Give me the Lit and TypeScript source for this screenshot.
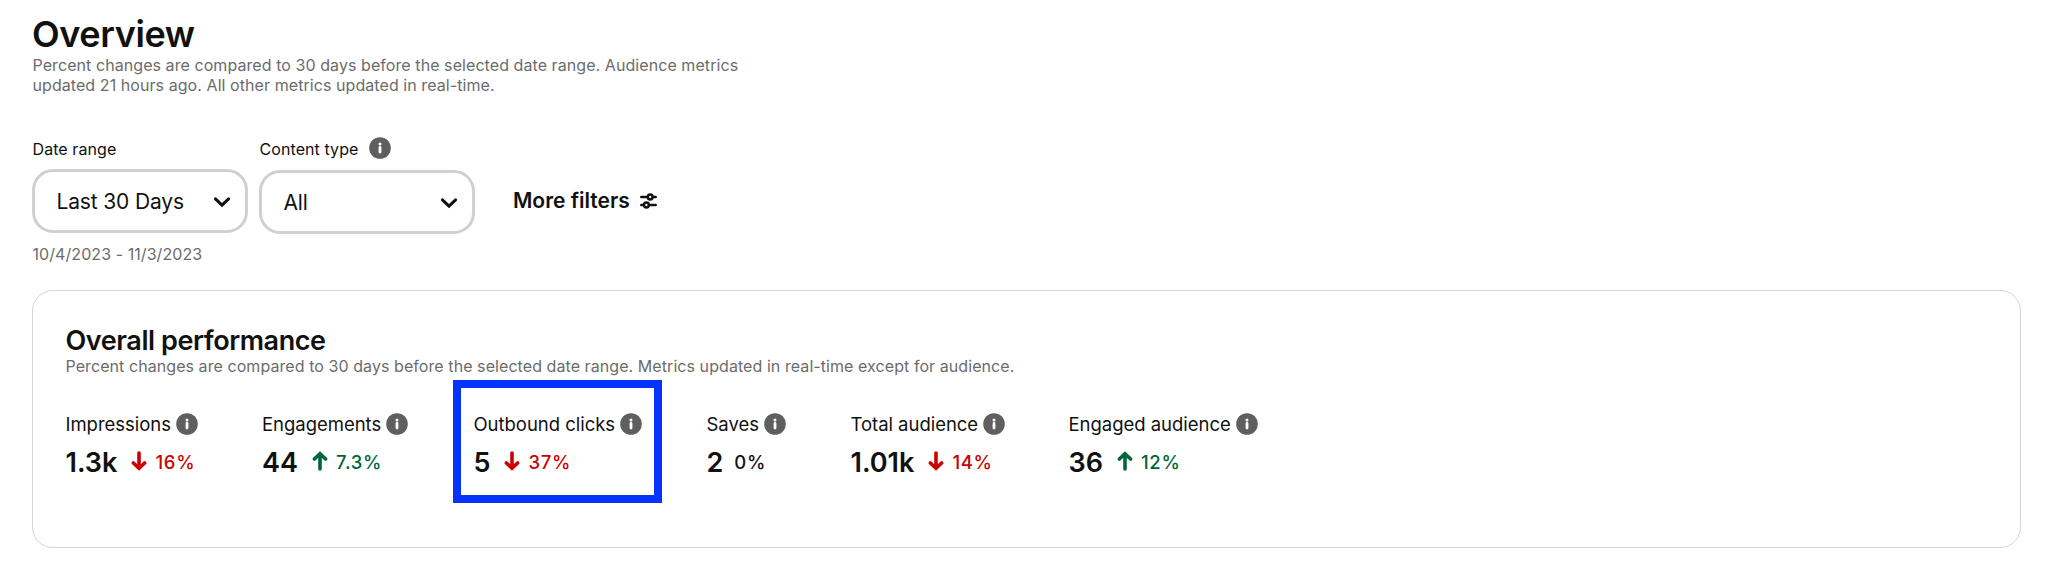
import { LitElement, html, css, svg } from "lit";
import { customElement, property } from "lit/decorators.js";

@customElement("info-icon")
class InfoIcon extends LitElement {
  static styles = css`
    :host { display: block; width: 22px; height: 22px; flex: none; }
    svg { display: block; width: 100%; height: 100%; }
  `;
  render() {
    return html`<svg viewBox="0 0 22 22">
      <circle cx="11" cy="11" r="10.8" fill="#5f5f5f"/>
      <circle cx="11" cy="6.9" r="1.5" fill="#fff"/>
      <path d="M11 10.4V15" stroke="#fff" stroke-width="2.8" stroke-linecap="round"/>
    </svg>`;
  }
}

@customElement("select-box")
class SelectBox extends LitElement {
  @property() value = "";
  static styles = css`
    :host {
      display: flex; align-items: center; justify-content: space-between;
      box-sizing: border-box; width: 216px; height: 64px;
      padding: 0 14px 0 21.5px; border: 3px solid #d0d0d0; border-radius: 21px;
      font-size: 21px; line-height: 26px; letter-spacing: -0.15px;
    }
    span { padding-top: 2px; }
    svg { display: block; width: 18px; height: 12px; margin-top: 1px; }
  `;
  render() {
    return html`<span>${this.value}</span>
      <svg viewBox="0 0 18 12"><path d="M2.4 2.8L9 9.2L15.6 2.8" fill="none" stroke="#111" stroke-width="3" stroke-linecap="round"/></svg>`;
  }
}

interface Metric { label: string; value: string; change: string; trend: "up" | "down" | "flat"; }

const METRICS: Metric[] = [
  { label: "Impressions", value: "1.3k", change: "16%", trend: "down" },
  { label: "Engagements", value: "44", change: "7.3%", trend: "up" },
  { label: "Outbound clicks", value: "5", change: "37%", trend: "down" },
  { label: "Saves", value: "2", change: "0%", trend: "flat" },
  { label: "Total audience", value: "1.01k", change: "14%", trend: "down" },
  { label: "Engaged audience", value: "36", change: "12%", trend: "up" },
];

@customElement("app-root")
class AppRoot extends LitElement {
  static styles = css`
    :host {
      display: block; box-sizing: border-box; height: 577px; padding: 13px 27.5px 0 32px;
      overflow: hidden; background: #fff; color: #111;
      font-family: Inter, "Liberation Sans", sans-serif;
    }
    h1, h2, p { margin: 0; }
    h1 { font-size: 36px; line-height: 43px; font-weight: 600; letter-spacing: -0.4px; }
    .note { font-size: 16px; line-height: 19.5px; color: #6c6c6c; letter-spacing: 0.07px; }
    .intro { width: 720px; padding-left: 0.5px; }
    .filters { display: flex; align-items: flex-start; margin-top: 42px; }
    .field { width: 216px; margin-right: 11px; }
    .caption { display: flex; align-items: center; gap: 11px; height: 22px; padding-left: 0.5px; font-size: 16px; letter-spacing: 0.08px; }
    .caption span { padding-top: 1px; }
    .date select-box { margin-top: 10px; }
    .type select-box { margin-top: 11px; }
    .range { margin-top: 12px; padding-left: 0.5px; }
    .more { display: flex; align-items: center; gap: 10px; margin: 51px 0 0 27px; font-size: 21px; line-height: 26px; font-weight: 600; }
    .more svg { display: block; width: 17px; height: 16px; }
    .card { box-sizing: border-box; height: 258px; margin-top: 25.5px; padding: 34px 33px 0 32.5px; border: 1px solid #d4d4d4; border-radius: 21px; }
    h2 { font-size: 27px; line-height: 32px; font-weight: 600; letter-spacing: -0.43px; }
    .metrics { display: grid; grid-template-columns: 196.5px 211.5px 233px 144px 218px 200px; margin-top: 35px; }
    .metric { position: relative; }
    .label { display: flex; align-items: center; gap: 5px; height: 24px; font-size: 18.5px; letter-spacing: -0.03px; white-space: nowrap; }
    .label span { padding-top: 1px; }
    .result { display: flex; align-items: center; height: 32px; margin-top: 11px; }
    .value { font-size: 27px; line-height: 32px; font-weight: 600; }
    .arrow { display: block; width: 16px; height: 20px; margin: 0 8px 4px 14px; }
    .change { font-size: 18.5px; font-weight: 500; letter-spacing: 0.7px; padding-bottom: 2px; }
    .flat .change { margin-left: 11px; }
    .down .change { color: #cc0000; }
    .up .change { color: #00653b; }
    .frame { position: absolute; left: -21px; top: -32px; box-sizing: border-box; width: 209px; height: 123px; border: 8px solid #0432ff; }
  `;

  arrow(trend: Metric["trend"]) {
    if (trend === "flat") return "";
    const down = trend === "down";
    return html`<svg class="arrow" viewBox="0 0 16 20" fill="none" stroke=${down ? "#cc0000" : "#00653b"} stroke-width="3.6" stroke-linecap="round">
      ${down ? svg`<path d="M8 2.1V17M2.4 12L8 17.2L13.6 12"/>` : svg`<path d="M8 17.9V3M2.4 8L8 2.8L13.6 8"/>`}
    </svg>`;
  }

  render() {
    return html`
      <h1>Overview</h1>
      <p class="note intro">Percent changes are compared to 30 days before the selected date range. Audience metrics updated 21 hours ago. All other metrics updated in real-time.</p>
      <div class="filters">
        <div class="field date">
          <div class="caption"><span>Date range</span></div>
          <select-box value="Last 30 Days"></select-box>
          <p class="note range">10/4/2023 - 11/3/2023</p>
        </div>
        <div class="field type">
          <div class="caption"><span>Content type</span><info-icon></info-icon></div>
          <select-box value="All"></select-box>
        </div>
        <div class="more">
          More filters
          <svg viewBox="0 0 17 16" fill="none" stroke="#111" stroke-width="2.5" stroke-linecap="round">
            <path d="M1.3 4H7.5M13 4H15.7M1.3 12H3.8M9.2 12H15.7"/>
            <circle cx="10.2" cy="4" r="2.4"/><circle cx="6.4" cy="12" r="2.4"/>
          </svg>
        </div>
      </div>
      <section class="card">
        <h2>Overall performance</h2>
        <p class="note">Percent changes are compared to 30 days before the selected date range. Metrics updated in real-time except for audience.</p>
        <div class="metrics">
          ${METRICS.map((x) => html`<div class="metric ${x.trend}">
            <div class="label"><span>${x.label}</span><info-icon></info-icon></div>
            <div class="result"><span class="value">${x.value}</span>${this.arrow(x.trend)}<span class="change">${x.change}</span></div>
            ${x.label === "Outbound clicks" ? html`<div class="frame"></div>` : ""}
          </div>`)}
        </div>
      </section>
    `;
  }
}
